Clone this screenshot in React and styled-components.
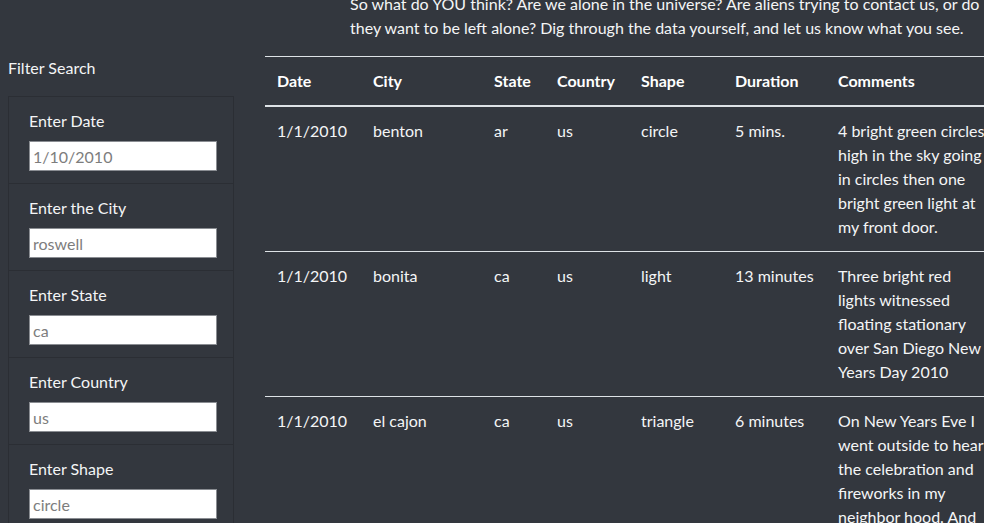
import React from "react";
import styled, { createGlobalStyle } from "styled-components";

const GlobalStyle = createGlobalStyle`
  html, body {
    margin: 0;
    padding: 0;
    background: #33373e;
    overflow: hidden;
  }
  body {
    color: #f4f5f6;
    font-family: Lato, "Open Sans", sans-serif;
    font-size: 16px;
    line-height: 24px;
  }
`;

const Page = styled.div`
  width: 1010px;
  margin-top: -8px;
  padding-left: 8px;
`;

const Intro = styled.p`
  margin: 0 0 16px 342px;
  white-space: nowrap;
`;

const Main = styled.div`
  display: flex;
  align-items: flex-start;
  gap: 31px;
`;

const Sidebar = styled.aside`
  width: 226px;
  flex: none;
`;

const SidebarTitle = styled.div`
  margin-bottom: 16px;
`;

const FilterList = styled.ul`
  list-style: none;
  margin: 0;
  padding: 0;
  border: 1px solid #2b2e34;
`;

const FilterItem = styled.li`
  padding: 12px 20px;
  & + & {
    border-top: 1px solid #2b2e34;
  }
`;

const FilterLabel = styled.label`
  display: block;
  margin-bottom: 8px;
`;

const FilterInput = styled.input`
  box-sizing: border-box;
  display: block;
  width: 188px;
  height: 30px;
  margin: 0;
  padding: 0 3px;
  border: 1px solid #8a8d92;
  background: #fff;
  font-family: inherit;
  font-size: 16px;
  color: #222;
  &::placeholder {
    color: #7d7d7d;
  }
`;

const Table = styled.table`
  flex: none;
  width: 735px;
  border-collapse: collapse;
  table-layout: fixed;
`;

const Th = styled.th`
  text-align: left;
  font-weight: 700;
  color: #ffffff;
  padding: 12px;
  border-top: 1px solid #dee2e6;
  border-bottom: 2px solid #dee2e6;
  vertical-align: bottom;
`;

const Row = styled.tr`
  & + & td {
    border-top: 1px solid #dee2e6;
  }
`;

const Td = styled.td`
  padding: 12px;
  vertical-align: top;
  color: #f4f5f6;
`;

const columns = [
  { key: "date", label: "Date", width: 96 },
  { key: "city", label: "City", width: 121 },
  { key: "state", label: "State", width: 63 },
  { key: "country", label: "Country", width: 84 },
  { key: "shape", label: "Shape", width: 94 },
  { key: "duration", label: "Duration", width: 103 },
  { key: "comments", label: "Comments", width: 174 },
];

const rows = [
  {
    date: "1/1/2010",
    city: "benton",
    state: "ar",
    country: "us",
    shape: "circle",
    duration: "5 mins.",
    comments:
      "4 bright green circles high in the sky going in circles then one bright green light at my front door.",
  },
  {
    date: "1/1/2010",
    city: "bonita",
    state: "ca",
    country: "us",
    shape: "light",
    duration: "13 minutes",
    comments:
      "Three bright red lights witnessed floating stationary over San Diego New Years Day 2010",
  },
  {
    date: "1/1/2010",
    city: "el cajon",
    state: "ca",
    country: "us",
    shape: "triangle",
    duration: "6 minutes",
    comments:
      "On New Years Eve I went outside to hear the celebration and fireworks in my neighbor hood. And all of a sudden I saw three lights in the sky.",
  },
];

const filters = [
  { id: "datetime", label: "Enter Date", placeholder: "1/10/2010" },
  { id: "city", label: "Enter the City", placeholder: "roswell" },
  { id: "state", label: "Enter State", placeholder: "ca" },
  { id: "country", label: "Enter Country", placeholder: "us" },
  { id: "shape", label: "Enter Shape", placeholder: "circle" },
];

export default function App() {
  return (
    <>
      <GlobalStyle />
      <Page>
        <Intro>
          So what do YOU think? Are we alone in the universe? Are aliens trying to contact us, or do
          <br />
          they want to be left alone? Dig through the data yourself, and let us know what you see.
        </Intro>
        <Main>
          <Sidebar>
            <SidebarTitle>Filter Search</SidebarTitle>
            <FilterList>
              {filters.map((f) => (
                <FilterItem key={f.id}>
                  <FilterLabel htmlFor={f.id}>{f.label}</FilterLabel>
                  <FilterInput id={f.id} type="text" placeholder={f.placeholder} />
                </FilterItem>
              ))}
            </FilterList>
          </Sidebar>
          <Table>
            <colgroup>
              {columns.map((c) => (
                <col key={c.key} style={{ width: c.width }} />
              ))}
            </colgroup>
            <thead>
              <tr>
                {columns.map((c) => (
                  <Th key={c.key}>{c.label}</Th>
                ))}
              </tr>
            </thead>
            <tbody>
              {rows.map((r, i) => (
                <Row key={i}>
                  {columns.map((c) => (
                    <Td key={c.key}>{r[c.key]}</Td>
                  ))}
                </Row>
              ))}
            </tbody>
          </Table>
        </Main>
      </Page>
    </>
  );
}
